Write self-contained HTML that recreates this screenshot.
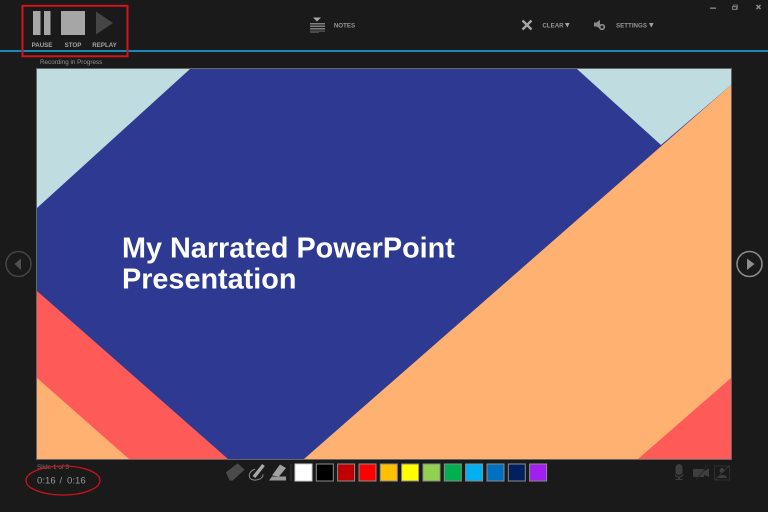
<!DOCTYPE html>
<html><head><meta charset="utf-8"><style>
html,body{margin:0;padding:0;background:#1a1a1a;width:768px;height:512px;overflow:hidden}
svg{display:block;position:absolute;left:0;top:0}
text{font-family:"Liberation Sans",sans-serif}
.s{filter:blur(.3px)}
</style></head><body>
<svg width="768" height="512" viewBox="0 0 768 512" xmlns="http://www.w3.org/2000/svg">
<rect width="768" height="512" fill="#1a1a1a"/>
<rect x="0" y="50" width="768" height="2" fill="#1689b4"/>
<!-- top left controls -->
<rect x="33" y="11" width="7.5" height="24" fill="#a6a6a6"/>
<rect x="44" y="11" width="6.5" height="24" fill="#a6a6a6"/>
<rect x="61" y="11" width="24" height="24" fill="#a6a6a6"/>
<path d="M96 11.500L113 23L96 34.500Z" fill="#454545"/>
<g class="s" fill="#a4a4a4" font-size="6.200" font-weight="bold" text-anchor="middle">
<text x="42" y="47">PAUSE</text>
<text x="73" y="47">STOP</text>
<text x="104.500" y="47">REPLAY</text>
<text x="344.500" y="27.500" fill="#969696">NOTES</text>
<text x="553" y="27.500" fill="#969696">CLEAR</text>
<text x="631.500" y="27.500" fill="#969696">SETTINGS</text>
</g>
<text class="s" x="40" y="64" font-size="6.300" fill="#949494">Recording in Progress</text>
<rect x="22.500" y="5.800" width="105" height="50.500" fill="none" stroke="#d2141e" stroke-width="2"/>
<!-- notes icon -->
<path d="M313 17.500h8l-4 4z" fill="#a8a8a8"/>
<g fill="#7e7e7e"><rect x="310" y="23" width="15" height="1.500"/><rect x="310" y="25.500" width="15" height="1.500"/><rect x="310" y="28" width="15" height="1.500"/><rect x="310" y="30.500" width="15" height="1.200" fill="#5e5e5e"/><rect x="310" y="32" width="9" height="1" fill="#4a4a4a"/></g>
<!-- clear -->
<path d="M522.500 20.500L531.500 29.500M531.500 20.500L522.500 29.500" stroke="#a4a4a4" stroke-width="2.400" fill="none"/>
<path d="M565 23h4.600l-2.300 4.600z M649 23h4.600l-2.300 4.600z" fill="#a0a0a0"/>
<!-- settings -->
<path d="M594 22.500h2.500l3.500-2.500v8.500l-3.500-2h-2.500z" fill="#8a8a8a"/>
<circle cx="602" cy="27" r="2.300" fill="none" stroke="#8a8a8a" stroke-width="1.700"/>
<!-- window controls -->
<rect x="710" y="7.500" width="6" height="1.300" fill="#8a8a8a"/>
<rect x="733.500" y="5" width="4" height="4" fill="none" stroke="#666" stroke-width="1"/>
<rect x="732.500" y="6.500" width="4" height="3" fill="#2a2a2a" stroke="#777" stroke-width="1"/>
<path d="M756.500 5L760.500 9M760.500 5L756.500 9" stroke="#8e8e8e" stroke-width="1.500"/>
<!-- slide -->
<rect x="36.500" y="68.500" width="695" height="391" fill="#2e3a92" stroke="#666" stroke-width="1"/>
<path d="M37 69H190L37 208Z" fill="#bfdce0"/>
<path d="M577 69H731V85L661 145Z" fill="#bfdce0"/>
<path d="M731 85V459H304Z" fill="#feb171"/>
<path d="M731 378V459H638Z" fill="#fe5a58"/>
<path d="M37 291L228 459H37Z" fill="#fe5a58"/>
<path d="M37 378L129 459H37Z" fill="#feb171"/>
<text class="s" font-size="28.800" font-weight="bold" fill="#fff"><tspan x="122" y="257.500">My Narrated PowerPoint</tspan><tspan x="122" y="288.300">Presentation</tspan></text>
<!-- nav -->
<circle cx="18.500" cy="264" r="12.500" fill="none" stroke="#444" stroke-width="1.500"/>
<path d="M21 258.500V270L14.500 264Z" fill="#505050"/>
<circle cx="749.500" cy="264" r="12.500" fill="none" stroke="#8e8e8e" stroke-width="1.500"/>
<path d="M747 258.500V270L754.500 264Z" fill="#8e8e8e"/>
<!-- bottom left -->
<text class="s" x="37" y="469" font-size="6.400" fill="#7c7c7c">Slide 1 of 3</text>
<text class="s" x="37" y="483.500" font-size="9.600" fill="#979797">0:16</text>
<text class="s" x="59.500" y="483.500" font-size="9.600" fill="#979797">/</text>
<text class="s" x="67" y="483.500" font-size="9.600" fill="#979797">0:16</text>
<ellipse cx="63" cy="480.500" rx="37" ry="14.500" fill="none" stroke="#c8141e" stroke-width="1.300"/>
<!-- pen tools -->
<path d="M226.500 472.500L237.500 464L244 469.500L232.500 480H230Z" fill="#4a4a4a" stroke="#4a4a4a" stroke-linejoin="round"/>
<path d="M254 477L263.500 465" stroke="#a8a8a8" stroke-width="3.400" fill="none"/>
<path d="M255 469C248 472 247 479 254 480C259 480.500 263 478 263 474.500" stroke="#8e8e8e" stroke-width="1" fill="none"/>
<path d="M272 475.500L280 464.500L286 468L279 476.500Z" fill="#a0a0a0"/>
<path d="M269 480.500L272 476.500H286V480.500Z" fill="#989898"/>
<rect x="290.500" y="464" width="1" height="17" fill="#3a3a3a"/>
<!-- swatches -->
<g stroke="#8c8c8c" stroke-width="1">
<rect x="295" y="464" width="17" height="17" fill="#fff" stroke="#ccc"/>
<rect x="316.300" y="464" width="17" height="17" fill="#000"/>
<rect x="337.600" y="464" width="17" height="17" fill="#c00000"/>
<rect x="359" y="464" width="17" height="17" fill="#ff0000"/>
<rect x="380.300" y="464" width="17" height="17" fill="#ffc000"/>
<rect x="401.600" y="464" width="17" height="17" fill="#ffff00"/>
<rect x="423" y="464" width="17" height="17" fill="#92d050"/>
<rect x="444.300" y="464" width="17" height="17" fill="#00b050"/>
<rect x="465.600" y="464" width="17" height="17" fill="#00b0f0"/>
<rect x="487" y="464" width="17" height="17" fill="#0070c0"/>
<rect x="508.300" y="464" width="17" height="17" fill="#002060"/>
<rect x="529.600" y="464" width="17" height="17" fill="#a020f0"/>
</g>
<!-- media icons -->
<rect x="675.500" y="464" width="7" height="11" rx="3.500" fill="#3e3e3e"/>
<path d="M675 472C675 478 683 478 683 472V476C682 478 676 478 675 476Z M678 477h2v2h-2z M675.500 479h7v1h-7z" fill="#3e3e3e"/>
<rect x="693" y="469" width="11" height="8" fill="#3e3e3e"/>
<path d="M704 471L709 468.500V477L704 475Z" fill="#3e3e3e"/>
<path d="M696 480L708 465" stroke="#2a2a2a" stroke-width="1"/>
<rect x="714.500" y="466" width="15" height="14" fill="none" stroke="#2e2e2e" stroke-width="1"/>
<circle cx="722" cy="470.500" r="2.500" fill="#3e3e3e"/>
<path d="M717 478C717 474 727 474 727 478Z" fill="#3e3e3e"/>
<path d="M715 480L729 466" stroke="#333" stroke-width="1"/>
</svg>
</body></html>
